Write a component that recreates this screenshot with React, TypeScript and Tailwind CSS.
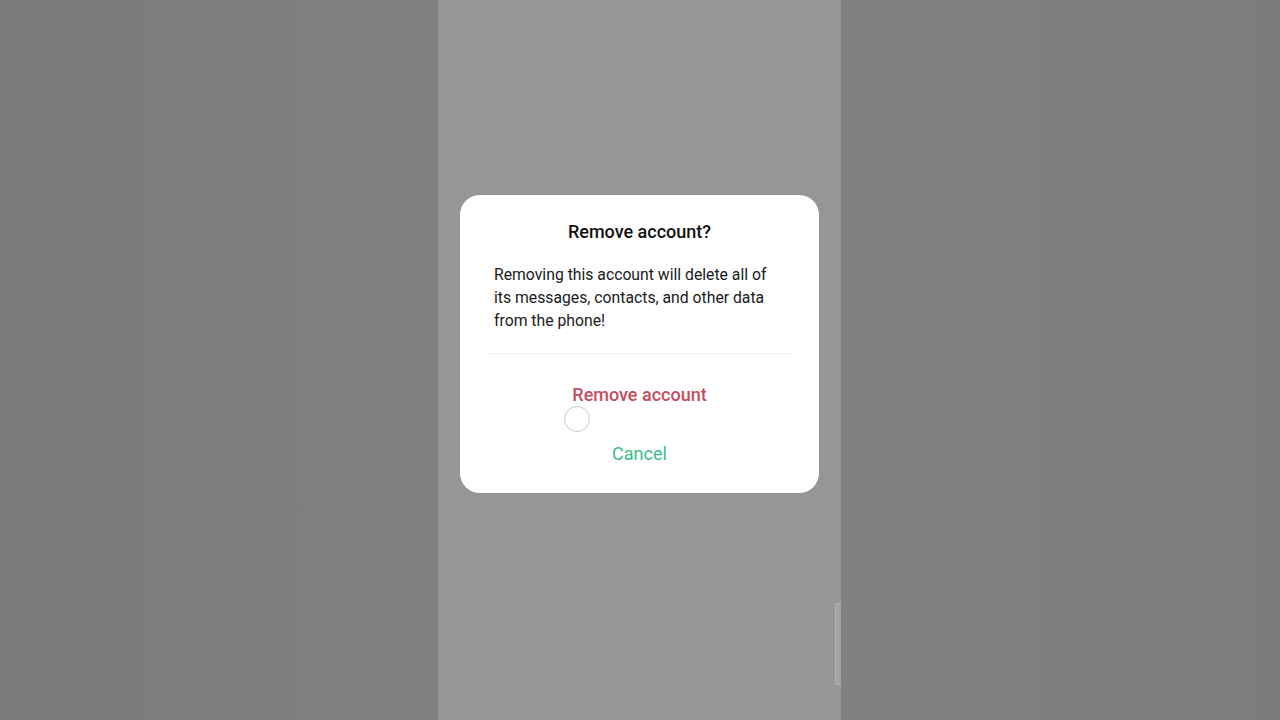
export default function App() {
  return (
    <div className="flex h-[720px] w-[1280px] overflow-hidden bg-[#808080]" style={{ fontFamily: 'Roboto, "Noto Sans", sans-serif' }}>
      <div className="h-full w-[438px] bg-gradient-to-r from-[#7a7a7a] to-[#818181]" />

      {/* Phone screen */}
      <div className="relative flex h-full w-[403px] flex-col items-center bg-[#969696] pt-[195px]">
        <div className="relative w-[359px] rounded-[20px] bg-white pb-[27px] pt-[25px]">
          <h2 className="text-center text-[18px] font-medium leading-[24px] text-[#111]">Remove account?</h2>
          <p className="mt-[19px] px-[34px] text-[15.75px] leading-[23px] text-[#1a1a1a]">
            Removing this account will delete all of its messages, contacts, and other data from the phone!
          </p>
          <div className="mx-[28px] mt-[21px] h-px bg-[#ececec]" />
          <div className="mt-[29px] text-center text-[18px] font-medium leading-[24px] text-[#c44d5e]">Remove account</div>
          <div className="mt-[35px] text-center text-[18px] leading-[24px] text-[#3dbb8c]">Cancel</div>

          {/* touch indicator */}
          <div className="absolute left-[104px] top-[211px] h-[26px] w-[26px] rounded-full border-[1.5px] border-[#c9c9d6]" />
        </div>

        {/* scroll handle */}
        <div className="absolute right-0 top-[603px] h-[82px] w-[6px] rounded-l-[3px] border border-r-0 border-[#b4b4b4] bg-[#a2a2a2]" />
      </div>

      <div className="h-full flex-1 bg-gradient-to-r from-[#818181] to-[#7c7c7c]" />
    </div>
  );
}
